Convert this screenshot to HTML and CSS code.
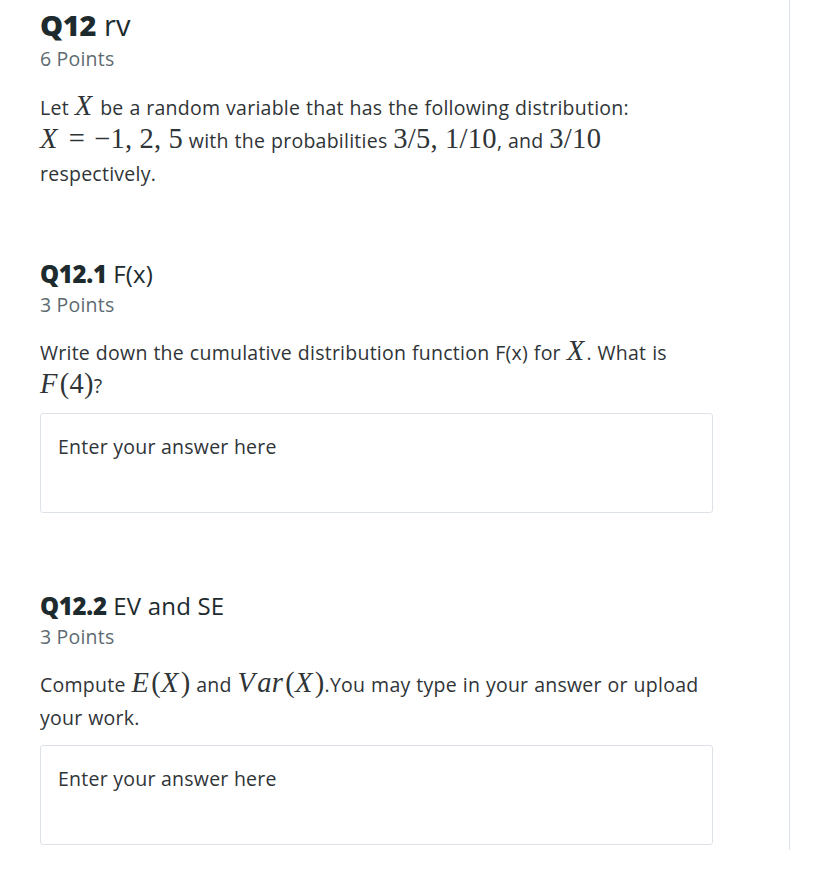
FILE: index.html
```html
<!DOCTYPE html>
<html lang="en">
<head>
<meta charset="utf-8">
<title>Q12 rv</title>
<link rel="stylesheet" href="styles.css">
</head>
<body>
<div class="page">
  <main class="content">
    <section class="question">
      <h1 class="q-title"><span class="q-num">Q12</span> rv</h1>
      <div class="q-points">6 Points</div>
      <p class="q-body">Let <span class="m"><span class="mi">X</span></span> be a random variable that has the following distribution: <span class="m"><span class="mi">X</span><span class="op">=</span>−1,<span class="th"></span>2,<span class="th"></span>5</span> with the probabilities <span class="m">3/5,<span class="th"></span>1/10</span>, and <span class="m">3/10</span> respectively.</p>
    </section>

    <section class="question sub">
      <h2 class="q-title"><span class="q-num">Q12.1</span> F(x)</h2>
      <div class="q-points">3 Points</div>
      <p class="q-body">Write down the cumulative distribution function F(x) for <span class="m"><span class="mi">X</span></span>. What is <span class="m"><span class="mi">F</span>(4)</span>?</p>
      <div class="answer">Enter your answer here</div>
    </section>

    <section class="question sub">
      <h2 class="q-title"><span class="q-num">Q12.2</span> EV and SE</h2>
      <div class="q-points">3 Points</div>
      <p class="q-body">Compute <span class="m"><span class="mi">E</span>(<span class="mi">X</span>)</span> and <span class="m"><span class="mi">V</span><span class="mi">ar</span>(<span class="mi">X</span>)</span>.You may type in your answer or upload your work.</p>
      <div class="answer">Enter your answer here</div>
    </section>
  </main>
</div>
</body>
</html>
```

FILE: styles.css
```css
html, body {
  margin: 0;
  padding: 0;
  background: #ffffff;
}

body {
  font-family: "Open Sans", "Noto Sans", sans-serif;
  color: #2f3437;
}

.page {
  display: flex;
}

.content {
  width: 790px;
  height: 850px;
  box-sizing: border-box;
  border-right: 1px solid #dde3ea;
  padding: 7px 0 0 40px;
}

.question {
  width: 673px;
}

.q-title {
  margin: 0;
  font-weight: 400;
  color: #1d2b2e;
  font-size: 29px;
  line-height: 36px;
  letter-spacing: 0.2px;
}

h2.q-title {
  font-size: 24px;
  line-height: 30px;
}

.q-num {
  font-weight: 800;
  letter-spacing: -0.3px;
}

.q-points {
  margin-top: 3px;
  font-size: 19.5px;
  line-height: 26px;
  color: #5e6b71;
  letter-spacing: 0.2px;
}

.q-body {
  margin: 19px 0 0 0;
  font-size: 19.5px;
  line-height: 33px;
  color: #2f3437;
  letter-spacing: 0.25px;
  word-spacing: 0.5px;
}

.sub {
  margin-top: 69px;
}

.sub + .sub {
  margin-top: 78px;
}

.sub .q-body {
  margin-top: 18px;
}

.m {
  font-family: "Liberation Serif", "DejaVu Serif", serif;
  font-size: 28.5px;
  line-height: 1;
  white-space: nowrap;
  letter-spacing: 0.3px;
  word-spacing: 0;
}

.mi {
  font-style: italic;
  padding-right: 2px;
}

.op {
  padding: 0 9px;
}

.th {
  display: inline-block;
  width: 7px;
}

.answer {
  margin-top: 11px;
  height: 100px;
  box-sizing: border-box;
  border: 1px solid #dde2e8;
  border-radius: 3px;
  padding: 19px 17px;
  font-size: 19.5px;
  line-height: 28px;
  color: #2f3437;
  letter-spacing: 0.25px;
}
```
